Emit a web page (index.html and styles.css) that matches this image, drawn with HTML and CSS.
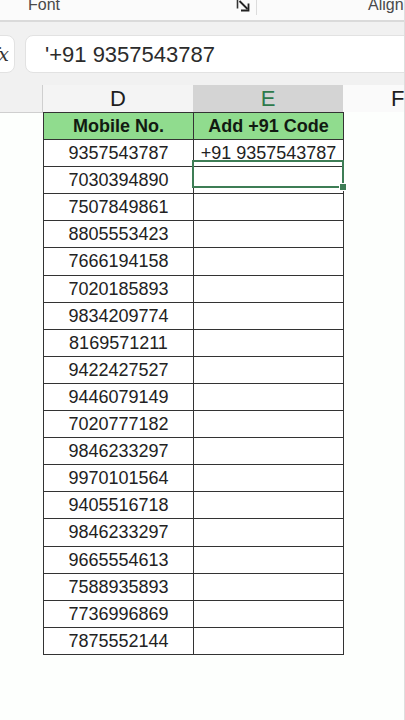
FILE: index.html
```html
<!DOCTYPE html>
<html>
<head>
<meta charset="utf-8">
<link rel="stylesheet" href="styles.css">
</head>
<body>
<div class="app">
  <div class="ribbon">
    <span class="rb-label font-label">Font</span>
    <svg class="launcher" width="14" height="12" viewBox="0 0 14 12">
      <path d="M1.5 0 V8.5" stroke="#333" stroke-width="1.6" fill="none"/>
      <path d="M3.5 1 L11.5 9" stroke="#222" stroke-width="1.8" fill="none"/>
      <path d="M5 10.5 H12.5 V3.5" stroke="#222" stroke-width="1.8" fill="none"/>
    </svg>
    <span class="rb-sep"></span>
    <span class="rb-label align-label">Align</span>
  </div>
  <div class="formula-bar">
    <div class="fx-box"><span class="fx">fx</span></div>
    <div class="fx-input">'+91 9357543787</div>
  </div>
  <div class="col-headers">
    <div class="corner"></div>
    <div class="ch ch-d">D</div>
    <div class="ch ch-e">E</div>
    <div class="ch ch-f">F</div>
  </div>
  <div class="sheet">
    <div class="rowhead"></div>
    <div class="table">
      <div class="cell head">Mobile No.</div><div class="cell head">Add +91 Code</div>
      <div class="cell">9357543787</div><div class="cell">+91 9357543787</div>
      <div class="cell">7030394890</div><div class="cell"></div>
      <div class="cell">7507849861</div><div class="cell"></div>
      <div class="cell">8805553423</div><div class="cell"></div>
      <div class="cell">7666194158</div><div class="cell"></div>
      <div class="cell">7020185893</div><div class="cell"></div>
      <div class="cell">9834209774</div><div class="cell"></div>
      <div class="cell">8169571211</div><div class="cell"></div>
      <div class="cell">9422427527</div><div class="cell"></div>
      <div class="cell">9446079149</div><div class="cell"></div>
      <div class="cell">7020777182</div><div class="cell"></div>
      <div class="cell">9846233297</div><div class="cell"></div>
      <div class="cell">9970101564</div><div class="cell"></div>
      <div class="cell">9405516718</div><div class="cell"></div>
      <div class="cell">9846233297</div><div class="cell"></div>
      <div class="cell">9665554613</div><div class="cell"></div>
      <div class="cell">7588935893</div><div class="cell"></div>
      <div class="cell">7736996869</div><div class="cell"></div>
      <div class="cell">7875552144</div><div class="cell"></div>
    </div>
    <div class="selection"><span class="handle"></span></div>
  </div>
</div>
</body>
</html>
```

FILE: styles.css
```css
html, body {
  margin: 0;
  padding: 0;
  background: #ffffff;
}

.app {
  width: 404px;
  height: 720px;
  border-right: 1px solid #dedede;
  overflow: hidden;
  font-family: "Liberation Sans", Arial, sans-serif;
  background: #fdfffd;
}

.ribbon {
  height: 20px;
  background: #fbfbfb;
  border-bottom: 2px solid #dadada;
  display: flex;
  align-items: flex-start;
  overflow: hidden;
}

.rb-label {
  font-size: 16px;
  color: #4a4a4a;
  line-height: 16px;
  margin-top: -3px;
}

.font-label {
  margin-left: 28px;
}

.launcher {
  margin-left: 176px;
  display: block;
}

.rb-sep {
  width: 1px;
  height: 15px;
  background: #dcdcdc;
  margin-left: 6px;
}

.align-label {
  margin-left: 111px;
}

.formula-bar {
  height: 63px;
  box-sizing: border-box;
  padding-top: 13px;
  background: #f1f1f1;
  display: flex;
  align-items: flex-start;
}

.fx-box {
  width: 27px;
  height: 38px;
  margin-left: -12px;
  box-sizing: border-box;
  background: #ffffff;
  border: 1px solid #e2e2e2;
  border-radius: 8px;
  display: flex;
  align-items: center;
  justify-content: center;
  flex-shrink: 0;
}

.fx {
  font-family: "DejaVu Serif", "Liberation Serif", serif;
  font-style: italic;
  font-size: 19px;
  color: #333;
  margin-left: -3px;
}

.fx-input {
  flex: 1;
  height: 38px;
  margin-left: 10px;
  margin-right: -20px;
  box-sizing: border-box;
  background: #ffffff;
  border: 1px solid #e2e2e2;
  border-radius: 8px;
  padding-left: 19px;
  font-size: 22px;
  line-height: 37px;
  color: #2b2b2b;
}

.col-headers {
  height: 27px;
  display: grid;
  grid-template-columns: 43px 150px 150px 1fr;
}

.corner {
  background: #f1f1f1;
  border-right: 1px solid #cfcfcf;
}

.ch {
  font-size: 22px;
  line-height: 28px;
  color: #1e1e1e;
  text-align: center;
}

.ch-d {
  background: #f4f4f4;
}

.ch-e {
  background: #d4d4d4;
  color: #2e7a4b;
}

.ch-f {
  background: #fafafa;
  text-align: left;
  padding-left: 48px;
}

.sheet {
  position: relative;
  display: flex;
  align-items: flex-start;
  background: #fdfffd;
  height: 608px;
}

.rowhead {
  width: 43px;
  height: 1px;
  border-top: 1px solid #cfcfcf;
}

.table {
  display: grid;
  grid-template-columns: 150px 150px;
  grid-auto-rows: 27.1px;
  border-top: 1px solid #333;
  border-left: 1px solid #333;
}

.cell {
  box-sizing: border-box;
  border-right: 1px solid #333;
  border-bottom: 1px solid #333;
  text-align: center;
  font-size: 18px;
  line-height: 26px;
  color: #222;
  background: #ffffff;
  white-space: nowrap;
  overflow: hidden;
}

.cell.head {
  background: #90dc8e;
  font-weight: bold;
  color: #121a12;
}

.selection {
  position: absolute;
  left: 192px;
  top: 48px;
  width: 152px;
  height: 28px;
  box-sizing: border-box;
  border: 2px solid #3d7d55;
}

.handle {
  position: absolute;
  right: -5px;
  bottom: -5px;
  width: 6px;
  height: 6px;
  background: #3d7d55;
  border: 1px solid #ffffff;
}
```
